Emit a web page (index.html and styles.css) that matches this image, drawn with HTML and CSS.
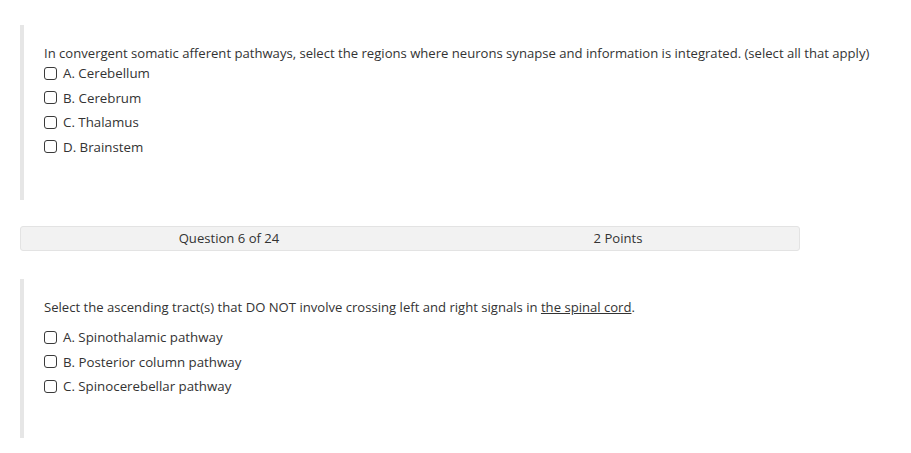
FILE: index.html
```html
<!DOCTYPE html>
<html>
<head>
<meta charset="utf-8">
<link rel="stylesheet" href="styles.css">
</head>
<body>
<div class="page">
  <section class="question q1">
    <p class="prompt">In convergent somatic afferent pathways, select the regions where neurons synapse and information is integrated. (select all that apply)</p>
    <ul class="options first">
      <li><span class="box"></span><span>A. Cerebellum</span></li>
      <li><span class="box"></span><span>B. Cerebrum</span></li>
      <li><span class="box"></span><span>C. Thalamus</span></li>
      <li><span class="box"></span><span>D. Brainstem</span></li>
    </ul>
  </section>
  <div class="qbar">
    <span class="qnum">Question 6 of 24</span>
    <span class="qpts">2 Points</span>
  </div>
  <section class="question q2">
    <p class="prompt">Select the ascending tract(s) that DO NOT involve crossing left and right signals in <u>the spinal cord</u>.</p>
    <ul class="options second">
      <li><span class="box"></span><span>A. Spinothalamic pathway</span></li>
      <li><span class="box"></span><span>B. Posterior column pathway</span></li>
      <li><span class="box"></span><span>C. Spinocerebellar pathway</span></li>
    </ul>
  </section>
</div>
</body>
</html>
```

FILE: styles.css
```css
html, body {
  margin: 0;
  padding: 0;
  background: #ffffff;
}
body {
  font-family: "Open Sans", "Liberation Sans", sans-serif;
  font-size: 13.1px;
  color: #333333;
}
.page {
  padding: 25px 0 0 20px;
}
.question {
  border-left: 4px solid #e6e6e6;
  padding-left: 20px;
  box-sizing: border-box;
}
.q1 {
  height: 175px;
  padding-top: 19px;
}
.q2 {
  margin-top: 28px;
  height: 159px;
  padding-top: 19px;
}
.prompt {
  margin: 0;
  line-height: 18px;
}
.options {
  list-style: none;
  margin: 0;
  padding: 0;
  font-size: 13.3px;
}
.options li {
  display: flex;
  align-items: center;
  height: 24.5px;
  gap: 6px;
}
.options.first {
  margin-top: -1px;
}
.options.second {
  margin-top: 9px;
}
.box {
  width: 11px;
  height: 11px;
  border: 1.5px solid #3a3a3a;
  border-radius: 3px;
  flex: none;
}
.qbar {
  margin-top: 26px;
  width: 780px;
  height: 25px;
  box-sizing: border-box;
  background: #f2f2f2;
  border: 1px solid #e3e3e3;
  border-radius: 3px;
  display: grid;
  grid-template-columns: 416px 1fr;
  align-items: center;
  line-height: 23px;
}
.qnum, .qpts {
  text-align: center;
}
```
